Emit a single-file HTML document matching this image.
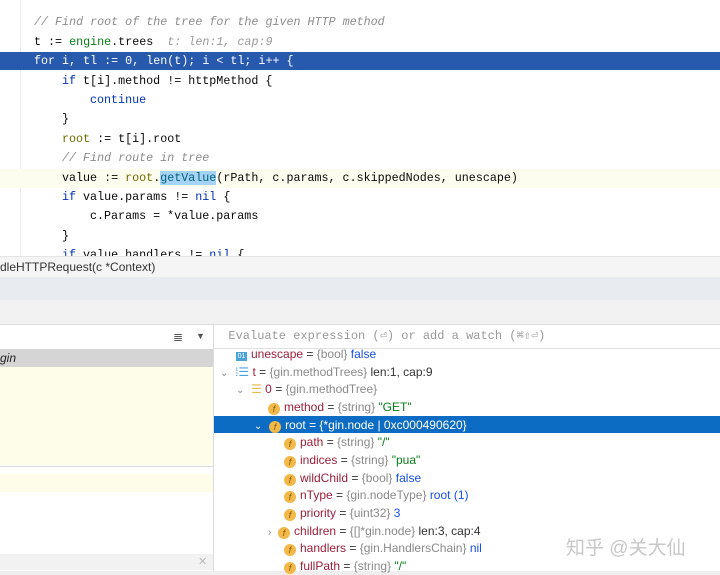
<!DOCTYPE html><html><head><style>
body{margin:0;width:720px;height:575px;position:relative;overflow:hidden;background:#fff;font-family:"Liberation Sans",sans-serif}
.a{position:absolute;white-space:pre}
.c{font-family:"Liberation Mono",monospace;font-size:11.7px;color:#080808;line-height:19px;height:19px}
.cm{color:#8c8c8c;font-style:italic}
.kw{color:#0033b3}
.gr{color:#067d17}
.rt{color:#6c6c00}
.t{font-size:12px;line-height:18px;height:18px;color:#333}
.n{color:#9a1f3a}
.g{color:#8a8a8a}
.b{color:#1750eb}
.s{color:#067d17}
.f{display:inline-block;width:12px;height:12px;border-radius:6px;background:#f3b84a;color:#8a5a00;font-size:9px;line-height:12px;text-align:center;vertical-align:-1px;margin-right:4px;font-style:italic}
.ar{color:#888;font-size:10px}
</style></head><body>
<div class="a" style="left:0;top:0;width:720px;height:256px;background:#fff"></div>
<div class="a" style="left:20px;top:0;width:1px;height:256px;background:#ececec"></div>
<div class="a" style="left:0;top:169px;width:720px;height:19px;background:#fdfdef"></div>
<div class="a" style="left:0;top:52px;width:720px;height:18px;background:#2759ad"></div>
<div class="a c" style="left:34px;top:13px"><span class="cm">// Find root of the tree for the given HTTP method</span></div>
<div class="a c" style="left:34px;top:33px">t := <span class="gr">engine</span>.trees  <span class="cm" style="color:#999">t: len:1, cap:9</span></div>
<div class="a c" style="left:34px;top:52px;color:#fff">for i, tl := 0, len(t); i &lt; tl; i++ {</div>
<div class="a c" style="left:62px;top:72px"><span class="kw">if</span> t[i].method != httpMethod {</div>
<div class="a c" style="left:90px;top:91px"><span class="kw">continue</span></div>
<div class="a c" style="left:62px;top:110px">}</div>
<div class="a c" style="left:62px;top:130px"><span class="rt">root</span> := t[i].root</div>
<div class="a c" style="left:62px;top:149px"><span class="cm">// Find route in tree</span></div>
<div class="a c" style="left:62px;top:169px">value := <span class="rt">root</span>.<span class="kw" style="background:#a6d2f5;color:#00627a">getValue</span>(rPath, c.params, c.skippedNodes, unescape)</div>
<div class="a c" style="left:62px;top:188px"><span class="kw">if</span> value.params != <span class="kw">nil</span> {</div>
<div class="a c" style="left:90px;top:207px">c.Params = *value.params</div>
<div class="a c" style="left:62px;top:227px">}</div>
<div class="a c" style="left:62px;top:246px;height:10px;overflow:hidden"><span class="kw">if</span> value.handlers != <span class="kw">nil</span> {</div>
<div class="a" style="left:0;top:256px;width:720px;height:20px;background:#f5f5f5;border-top:1px solid #e4e4e4;font-size:12px;line-height:20px;color:#333">dleHTTPRequest(c *Context)</div>
<div class="a" style="left:0;top:277px;width:720px;height:23px;background:#e8ecf1"></div>
<div class="a" style="left:0;top:300px;width:720px;height:24px;background:#f2f2f2;border-bottom:1px solid #dcdcdc"></div>
<div class="a" style="left:213px;top:325px;width:1px;height:250px;background:#dcdcdc"></div>
<div class="a" style="left:0;top:325px;width:213px;height:23px;background:#fff"></div>
<div class="a" style="left:173px;top:330px;font-size:12px;color:#555">≣</div>
<div class="a" style="left:196px;top:331px;font-size:9px;color:#555">▼</div>
<div class="a" style="left:0;top:349px;width:213px;height:18px;background:#d5d5d5;font-size:12px;line-height:18px;font-style:italic;color:#222">gin</div>
<div class="a" style="left:0;top:367px;width:213px;height:98px;background:#fefde9"></div>
<div class="a" style="left:0;top:466px;width:213px;height:1px;background:#dcdcdc"></div>
<div class="a" style="left:0;top:474px;width:213px;height:18px;background:#fefde9"></div>
<div class="a" style="left:0;top:554px;width:213px;height:16px;background:#f2f2f2"></div>
<div class="a" style="left:198px;top:555px;font-size:11px;color:#bbb">✕</div>
<div class="a" style="left:0;top:571px;width:720px;height:4px;background:#eee"></div>
<div class="a" style="left:214px;top:325px;width:506px;height:23px;background:#fff;border-bottom:1px solid #e0e0e0;font-family:'Liberation Mono',monospace;font-size:12px;line-height:23px;color:#999">  Evaluate expression (⏎) or add a watch (⌘⇧⏎)</div>
<div class="a" style="left:214px;top:416px;width:506px;height:17px;background:#0c6bc2"></div>
<div class="a t" style="left:236px;top:345px"><span style="display:inline-block;width:11px;height:9px;background:#4aa3d8;color:#fff;font-size:7px;line-height:9px;text-align:center;margin-right:4px">01</span><span class="n">unescape</span> = <span class="g">{bool}</span> <span class="b">false</span></div>
<div class="a t" style="left:220px;top:363px"><span class="ar">⌄</span>  <span style="color:#4aa3d8">⁞☰</span> <span class="n">t</span> = <span class="g">{gin.methodTrees}</span> len:1, cap:9</div>
<div class="a t" style="left:236px;top:380px"><span class="ar">⌄</span>  <span style="color:#e7b84a">☰</span> <span class="n">0</span> = <span class="g">{gin.methodTree}</span></div>
<div class="a t" style="left:268px;top:398px"><span class="f">f</span><span class="n">method</span> = <span class="g">{string}</span> <span class="s">"GET"</span></div>
<div class="a t" style="left:254px;top:416px;color:#fff"><span style="font-size:10px">⌄</span>  <span class="f">f</span>root = {*gin.node | 0xc000490620}</div>
<div class="a t" style="left:284px;top:433px"><span class="f">f</span><span class="n">path</span> = <span class="g">{string}</span> <span class="s">"/"</span></div>
<div class="a t" style="left:284px;top:451px"><span class="f">f</span><span class="n">indices</span> = <span class="g">{string}</span> <span class="s">"pua"</span></div>
<div class="a t" style="left:284px;top:469px"><span class="f">f</span><span class="n">wildChild</span> = <span class="g">{bool}</span> <span class="b">false</span></div>
<div class="a t" style="left:284px;top:486px"><span class="f">f</span><span class="n">nType</span> = <span class="g">{gin.nodeType}</span> <span class="b">root (1)</span></div>
<div class="a t" style="left:284px;top:504px"><span class="f">f</span><span class="n">priority</span> = <span class="g">{uint32}</span> <span class="b">3</span></div>
<div class="a t" style="left:268px;top:522px"><span class="ar">›</span>  <span class="f">f</span><span class="n">children</span> = <span class="g">{[]*gin.node}</span> len:3, cap:4</div>
<div class="a t" style="left:284px;top:539px"><span class="f">f</span><span class="n">handlers</span> = <span class="g">{gin.HandlersChain}</span> <span class="b">nil</span></div>
<div class="a t" style="left:284px;top:557px"><span class="f">f</span><span class="n">fullPath</span> = <span class="g">{string}</span> <span class="s">"/"</span></div>
<div class="a" style="left:566px;top:533px;font-family:'Liberation Sans','Noto Sans CJK SC',sans-serif;font-size:19px;color:#c8c8c8">知乎 @关大仙</div>
</body></html>
